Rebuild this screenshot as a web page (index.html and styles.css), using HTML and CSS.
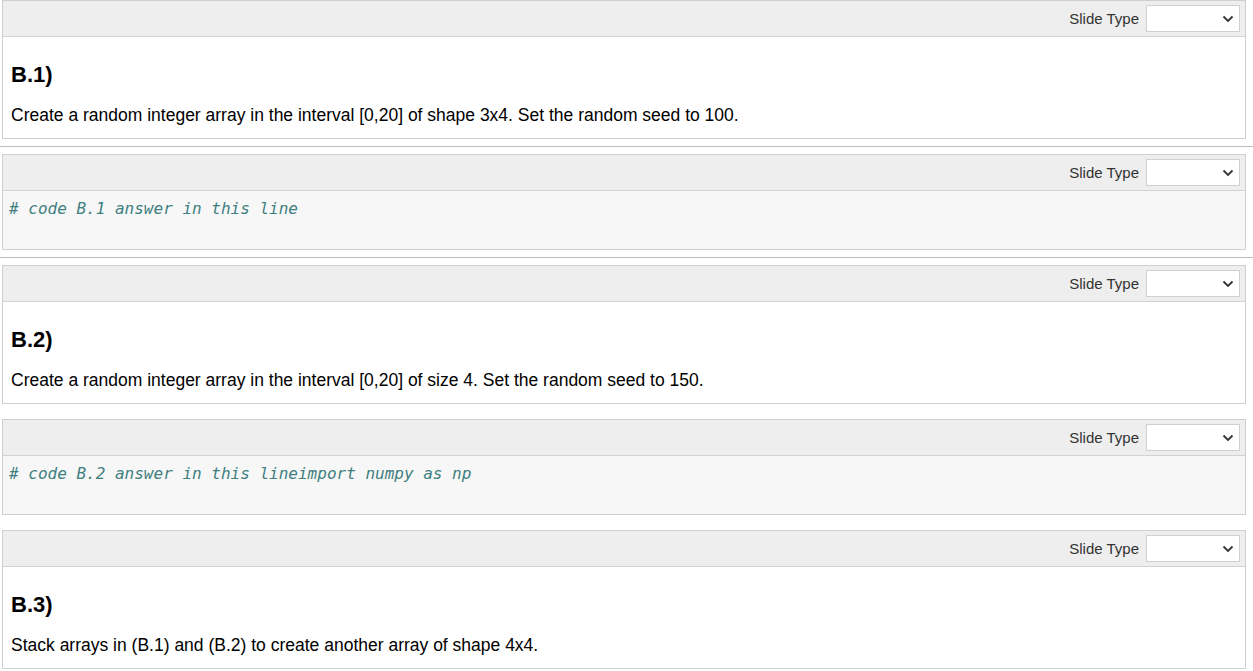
FILE: index.html
```html
<!DOCTYPE html>
<html>
<head>
<meta charset="utf-8">
<link rel="stylesheet" href="styles.css">
</head>
<body>
<div class="nb">
  <div class="cell md">
    <div class="toolbar"><span class="label">Slide Type</span><div class="sel"><svg width="12" height="8" viewBox="0 0 12 8"><path d="M1.5 1.5 L6 6 L10.5 1.5" fill="none" stroke="#333" stroke-width="1.8"/></svg></div></div>
    <div class="mdbody">
      <h3>B.1)</h3>
      <p>Create a random integer array in the interval [0,20] of shape 3x4. Set the random seed to 100.</p>
    </div>
  </div>
  <div class="sep"></div>
  <div class="cell code">
    <div class="toolbar"><span class="label">Slide Type</span><div class="sel"><svg width="12" height="8" viewBox="0 0 12 8"><path d="M1.5 1.5 L6 6 L10.5 1.5" fill="none" stroke="#333" stroke-width="1.8"/></svg></div></div>
    <div class="codebody"><span class="cm"># code B.1 answer in this line</span></div>
  </div>
  <div class="sep"></div>
  <div class="cell md">
    <div class="toolbar"><span class="label">Slide Type</span><div class="sel"><svg width="12" height="8" viewBox="0 0 12 8"><path d="M1.5 1.5 L6 6 L10.5 1.5" fill="none" stroke="#333" stroke-width="1.8"/></svg></div></div>
    <div class="mdbody">
      <h3>B.2)</h3>
      <p>Create a random integer array in the interval [0,20] of size 4. Set the random seed to 150.</p>
    </div>
  </div>
  <div class="gap"></div>
  <div class="cell code">
    <div class="toolbar"><span class="label">Slide Type</span><div class="sel"><svg width="12" height="8" viewBox="0 0 12 8"><path d="M1.5 1.5 L6 6 L10.5 1.5" fill="none" stroke="#333" stroke-width="1.8"/></svg></div></div>
    <div class="codebody"><span class="cm"># code B.2 answer in this lineimport numpy as np</span></div>
  </div>
  <div class="gap"></div>
  <div class="cell md">
    <div class="toolbar"><span class="label">Slide Type</span><div class="sel"><svg width="12" height="8" viewBox="0 0 12 8"><path d="M1.5 1.5 L6 6 L10.5 1.5" fill="none" stroke="#333" stroke-width="1.8"/></svg></div></div>
    <div class="mdbody">
      <h3>B.3)</h3>
      <p>Stack arrays in (B.1) and (B.2) to create another array of shape 4x4.</p>
    </div>
  </div>
</div>
</body>
</html>
```
FILE: styles.css
```css
html, body {
  margin: 0;
  padding: 0;
  background: #fff;
}
body {
  font-family: "Liberation Sans", Arial, sans-serif;
  color: #000;
}
.nb {
  display: flex;
  flex-direction: column;
}
.cell {
  margin: 0 7px 0 2px;
  border: 1px solid #cfcfcf;
  display: flex;
  flex-direction: column;
}
.sep {
  height: 1px;
  background: #bdbdbd;
  margin: 7px 0;
}
.gap {
  height: 15px;
}
.toolbar {
  height: 35px;
  background: #eeeeee;
  border-bottom: 1px solid #d2d2d2;
  display: flex;
  align-items: center;
  justify-content: flex-end;
  padding-right: 5px;
  box-sizing: content-box;
}
.label {
  font-size: 15px;
  color: #333;
  margin-right: 7px;
}
.sel {
  height: 25px;
  background: #fff;
  border: 1px solid #d0d0d0;
  display: flex;
  align-items: center;
  justify-content: flex-end;
  padding-right: 5px;
  box-sizing: content-box;
  width: 87px;
}
.mdbody {
  height: 101px;
  padding: 0 8px;
}
.mdbody h3 {
  font-size: 22px;
  font-weight: bold;
  margin: 26px 0 0;
  line-height: 24px;
}
.mdbody p {
  font-size: 17.5px;
  margin: 18px 0 0;
  line-height: 20px;
}
.codebody {
  height: 58px;
  background: #f7f7f7;
  padding: 0 6px;
  box-sizing: border-box;
}
.cm {
  display: block;
  font-family: "DejaVu Sans Mono", monospace;
  font-style: italic;
  font-size: 16px;
  color: #3f7f7f;
  line-height: 20px;
  margin-top: 8px;
}
```
